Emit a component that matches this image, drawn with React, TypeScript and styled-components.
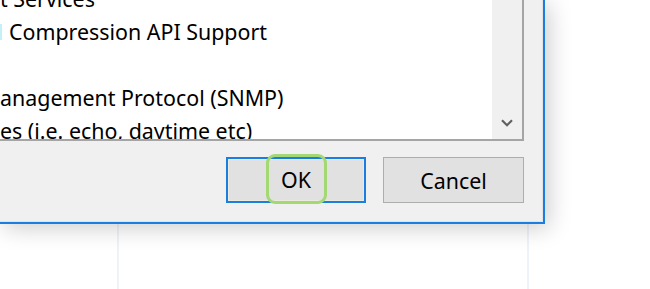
import React from 'react';
import styled, { createGlobalStyle } from 'styled-components';

const GlobalStyle = createGlobalStyle`
    html, body {
        margin: 0;
        padding: 0;
        background: #ffffff;
        overflow: hidden;
    }
    #root {
        width: 650px;
        height: 289px;
    }
`;

const Page = styled.div`
    position: relative;
    width: 650px;
    height: 289px;
    overflow: hidden;
    background: #ffffff;
    font-family: 'Noto Sans', 'Open Sans', sans-serif;
`;

// the window behind the dialog: a few column dividers
const Backdrop = styled.div`
    display: grid;
    grid-template-columns: 119px 410px 1fr;
    height: 100%;
`;

const Column = styled.div<{ $divider?: boolean }>`
    border-right: ${({ $divider }) => ($divider ? '2px solid #eef3f9' : 'none')};
`;

const Dialog = styled.div`
    position: absolute;
    top: 0;
    left: 0;
    width: 545px;
    height: 224px;
    box-sizing: border-box;
    display: flex;
    flex-direction: column;
    background: #f0f0f0;
    border-right: 2px solid #1a7ee0;
    border-bottom: 2px solid #1a7ee0;
    box-shadow: inset -1px -1px 0 #e2e2e2, 4px 4px 22px rgba(0, 0, 0, 0.2);
`;

const ListBox = styled.div`
    display: flex;
    width: 524px;
    height: 141px;
    box-sizing: border-box;
    background: #ffffff;
    border-right: 2px solid #a5a5a5;
    border-bottom: 2px solid #a5a5a5;
`;

const Rows = styled.div`
    flex: 1;
    overflow: hidden;
    display: flex;
    flex-direction: column;
    margin-top: -18px;
`;

const Row = styled.div<{ $indent: number }>`
    display: flex;
    align-items: center;
    height: 33px;
    flex: none;
    padding-left: ${({ $indent }) => $indent}px;
    font-size: 21.4px;
    line-height: 33px;
    color: #000000;
    white-space: nowrap;
`;

const Sliver = styled.span`
    width: 2px;
    height: 16px;
    margin-right: 7px;
    background: #c4f1f6;
`;

const ScrollBar = styled.div`
    width: 30px;
    display: flex;
    flex-direction: column;
    justify-content: flex-end;
    background: #f0f0f0;
`;

const ArrowButton = styled.div`
    height: 32px;
    display: flex;
    align-items: center;
    justify-content: center;
`;

const ButtonBar = styled.div`
    display: flex;
    gap: 17px;
    padding: 16px 0 0 226px;
`;

const Button = styled.button<{ $default?: boolean }>`
    width: ${({ $default }) => ($default ? '140px' : '141px')};
    height: 46px;
    box-sizing: border-box;
    display: flex;
    align-items: center;
    justify-content: center;
    padding: 0;
    overflow: visible;
    background: #e1e1e1;
    border: ${({ $default }) => ($default ? '2px solid #1a7ee0' : '1px solid #adadad')};
    box-shadow: ${({ $default }) => ($default ? 'inset 0 0 0 1px #ece9de' : 'none')};
    font-family: 'Noto Sans', 'Open Sans', sans-serif;
    font-size: 21.4px;
    color: #000000;
`;

// annotation ring drawn round the OK label
const Highlight = styled.span`
    display: inline-flex;
    align-items: center;
    justify-content: center;
    flex: none;
    width: 61px;
    height: 50px;
    margin-top: -2px;
    box-sizing: border-box;
    border: 3px solid #a3d872;
    border-radius: 9px;
`;

const rows: { indent: number; text: string; sliver?: boolean }[] = [
    { indent: -3, text: 't Services' },
    { indent: 0, text: 'Compression API Support', sliver: true },
    { indent: 0, text: '' },
    { indent: 0, text: 'anagement Protocol (SNMP)' },
    { indent: 0, text: 'es (i.e. echo, daytime etc)' },
];

const App: React.FC = () => {
    return (
        <>
            <GlobalStyle />
            <Page>
                <Backdrop>
                    <Column $divider />
                    <Column $divider />
                    <Column />
                </Backdrop>
                <Dialog>
                    <ListBox>
                        <Rows>
                            {rows.map((r, i) => (
                                <Row key={i} $indent={r.indent}>
                                    {r.sliver && <Sliver />}
                                    {r.text}
                                </Row>
                            ))}
                        </Rows>
                        <ScrollBar>
                            <ArrowButton>
                                <svg width="12" height="8" viewBox="0 0 12 8">
                                    <path d="M1 1.2 L6 6.2 L11 1.2" fill="none" stroke="#606060" strokeWidth="2.2" />
                                </svg>
                            </ArrowButton>
                        </ScrollBar>
                    </ListBox>
                    <ButtonBar>
                        <Button $default>
                            <Highlight>OK</Highlight>
                        </Button>
                        <Button>Cancel</Button>
                    </ButtonBar>
                </Dialog>
            </Page>
        </>
    );
};

export default App;
